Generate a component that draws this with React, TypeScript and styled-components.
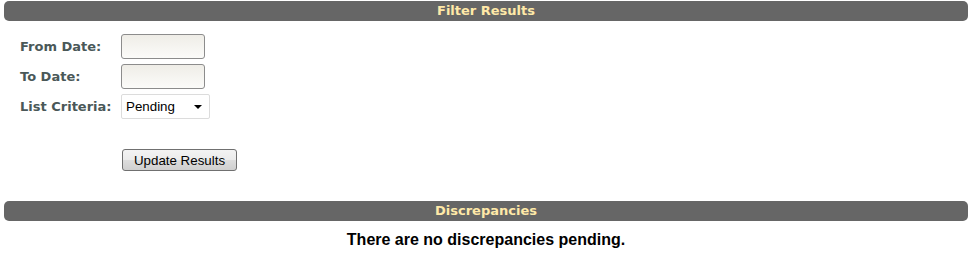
import React from "react";
import styled, { createGlobalStyle } from "styled-components";

const Global = createGlobalStyle`
  html, body { margin: 0; padding: 0; background: #fff; }
  body { font-family: "DejaVu Sans", Verdana, sans-serif; }
`;

const Page = styled.div`
  padding: 1px 5px 0 4px;
  display: flex;
  flex-direction: column;
`;

const SectionBar = styled.div`
  height: 20px;
  background: #666666;
  border-radius: 5px;
  color: #ffe9a8;
  font-family: "DejaVu Sans", Verdana, sans-serif;
  font-weight: bold;
  font-size: 13px;
  line-height: 20px;
  text-align: center;
`;

const Form = styled.div`
  display: grid;
  grid-template-columns: 101px auto;
  grid-auto-rows: 25px;
  row-gap: 5px;
  padding: 13px 0 0 16px;
  align-items: center;
  justify-items: start;
`;

const Label = styled.label`
  font-family: "DejaVu Sans", Verdana, sans-serif;
  font-weight: bold;
  font-size: 13px;
  color: #4a5858;
`;

const DateInput = styled.input`
  box-sizing: border-box;
  width: 84px;
  height: 25px;
  margin: 0;
  border: 1px solid #8c8c8c;
  border-radius: 3px;
  background: linear-gradient(#efede7, #fbfbf9);
  padding: 0 4px;
  font: 13px "Liberation Sans", Arial, sans-serif;
`;

const SelectWrap = styled.div`
  position: relative;
`;

const Select = styled.select`
  box-sizing: border-box;
  width: 89px;
  height: 25px;
  margin: 0;
  appearance: none;
  -webkit-appearance: none;
  border: 1px solid #dcdcdc;
  border-radius: 2px;
  background: #fff;
  padding: 0 0 0 4px;
  font: 13.33px "Liberation Sans", Arial, sans-serif;
  color: #000;
`;

const Arrow = styled.span`
  position: absolute;
  right: 8px;
  top: 11px;
  width: 0;
  height: 0;
  border-left: 4px solid transparent;
  border-right: 4px solid transparent;
  border-top: 4px solid #000;
  pointer-events: none;
`;

const ButtonRow = styled.div`
  padding: 30px 0 0 118px;
  display: flex;
`;

const Button = styled.button`
  box-sizing: border-box;
  width: 115px;
  height: 22px;
  border: 1px solid #707070;
  border-radius: 3px;
  background: linear-gradient(#f3f3f3 0%, #ebebeb 50%, #dddddd 51%, #cfcfcf 100%);
  font: 13.33px "Liberation Sans", Arial, sans-serif;
  color: #000;
  padding: 0;
`;

const Spacer = styled.div<{ h: number }>`
  height: ${(p) => p.h}px;
`;

const Message = styled.div`
  text-align: center;
  font: bold 16px "Liberation Sans", Arial, sans-serif;
  color: #000;
  padding-top: 10px;
`;

export default function App() {
  return (
    <>
      <Global />
      <Page>
        <SectionBar>Filter Results</SectionBar>
        <Form>
          <Label>From Date:</Label>
          <DateInput type="text" />
          <Label>To Date:</Label>
          <DateInput type="text" />
          <Label>List Criteria:</Label>
          <SelectWrap>
            <Select defaultValue="Pending">
              <option>Pending</option>
              <option>All</option>
            </Select>
            <Arrow />
          </SelectWrap>
        </Form>
        <ButtonRow>
          <Button>Update Results</Button>
        </ButtonRow>
        <Spacer h={30} />
        <SectionBar>Discrepancies</SectionBar>
        <Message>There are no discrepancies pending.</Message>
      </Page>
    </>
  );
}
